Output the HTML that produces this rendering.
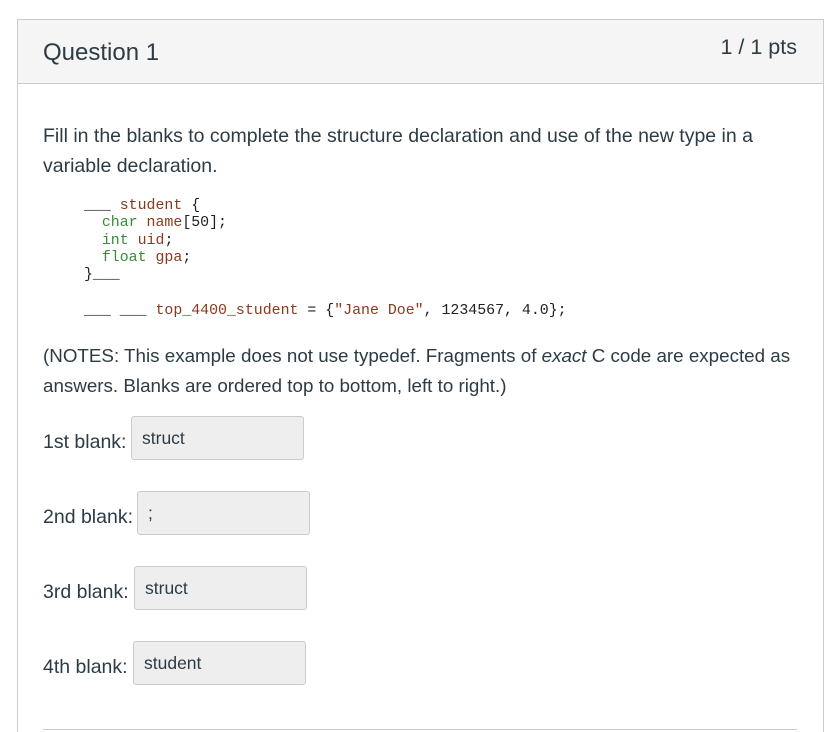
<!DOCTYPE html>
<html><head><meta charset="utf-8"><style>
html,body{margin:0;width:837px;height:732px;overflow:hidden}
body{background:#fff;position:relative;font-family:"Liberation Sans",sans-serif;color:#2d3b45}
.box{position:absolute;left:17px;top:19px;width:805px;height:713px;border:1px solid #c7cdd1;border-bottom:none}
.hdr{position:absolute;left:0;top:0;width:805px;height:63px;background:#f5f5f5;border-bottom:1px solid #c7cdd1}
.a{position:absolute;white-space:nowrap}
.code{position:absolute;font-family:"Liberation Mono",monospace;font-size:14.9px;line-height:17.3px;white-space:pre;color:#8a3a1e}
.g{color:#3a8a3a}.k{color:#222}
.inp{position:absolute;height:44px;background:#eee;border:1px solid #c7cdd1;border-radius:3px;font-size:17.5px;color:#2d3b45;box-sizing:border-box;padding:11px 10px}
.lbl{position:absolute;font-size:19.5px;white-space:nowrap}
</style></head><body>
<div class="box"><div class="hdr"></div></div>
<div class="a" style="left:43px;top:39px;font-size:24px;">Question 1</div>
<div class="a" style="right:40px;top:35px;font-size:21.5px;">1 / 1 pts</div>
<div class="a" style="left:43px;top:121px;font-size:19.5px;line-height:30px;">Fill in the blanks to complete the structure declaration and use of the new type in a<br>variable declaration.</div>
<div class="code" style="left:84px;top:198px"><span class="k">___</span> student <span class="k">{</span>
  <span class="g">char</span> name<span class="k">[50];</span>
  <span class="g">int</span> uid<span class="k">;</span>
  <span class="g">float</span> gpa<span class="k">;</span>
<span class="k">}___</span></div>
<div class="code" style="left:84px;top:303px"><span class="k">___</span> <span class="k">___</span> top_4400_student <span class="k">=</span> <span class="k">{</span>"Jane Doe"<span class="k">, 1234567, 4.0};</span></div>
<div class="a" style="left:43px;top:341px;font-size:18.8px;line-height:30px;">(NOTES: This example does not use typedef. Fragments of <i>exact</i> C code are expected as<br>answers. Blanks are ordered top to bottom, left to right.)</div>
<div class="lbl" style="left:43px;top:431px">1st blank:</div>
<div class="inp" style="left:131px;top:416px;width:173px">struct</div>
<div class="lbl" style="left:43px;top:506px">2nd blank:</div>
<div class="inp" style="left:137px;top:491px;width:173px">;</div>
<div class="lbl" style="left:43px;top:581px">3rd blank:</div>
<div class="inp" style="left:134px;top:566px;width:173px">struct</div>
<div class="lbl" style="left:43px;top:656px">4th blank:</div>
<div class="inp" style="left:133px;top:641px;width:173px">student</div>
<div class="a" style="left:43px;top:729px;width:754px;height:1px;background:#c7cdd1"></div>
</body></html>
